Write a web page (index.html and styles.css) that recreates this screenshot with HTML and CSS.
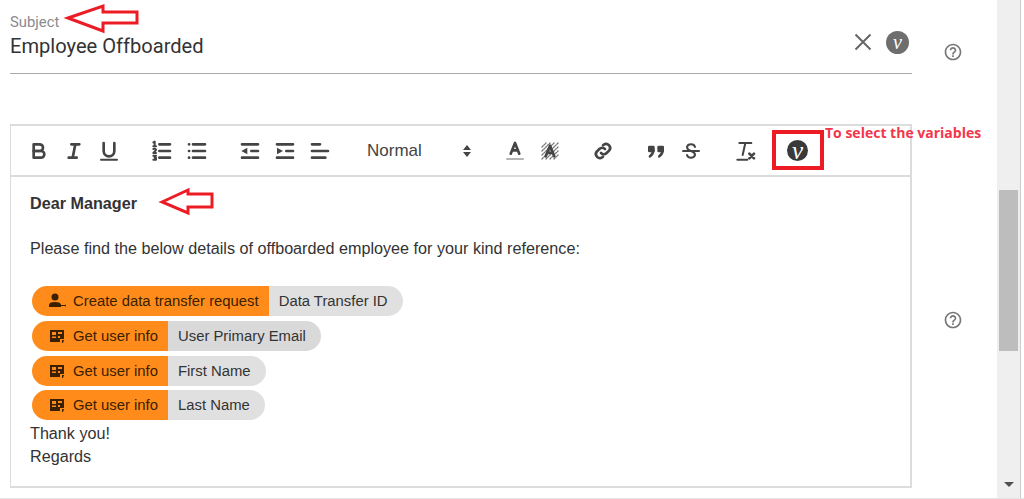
FILE: index.html
```html
<!DOCTYPE html>
<html>
<head>
    <title>Email template</title>
    <link rel="stylesheet" href="styles.css">
</head>
<body>
<div class="page">
    <div class="form">
        <div class="subject">
            <div class="subjectLabel">Subject</div>
            <div class="subjectRow">
                <div class="subjectValue">Employee Offboarded</div>
                <svg class="clearIcon" width="20" height="20" viewBox="0 0 20 20"><path d="M2.500 2.500L17.500 17.500M17.500 2.500L2.500 17.500"/></svg>
                <span class="varIcon varLight">v</span>
            </div>
        </div>

        <div class="editor">
            <div class="toolbar">
                <div class="group">
                    <button class="btn"><svg viewBox="0 0 18 18"><path d="M5,4H9.500A2.500,2.500,0,0,1,12,6.500v0A2.500,2.500,0,0,1,9.500,9H5V4Z"/><path d="M5,9h5.500A2.500,2.500,0,0,1,13,11.500v0A2.500,2.500,0,0,1,10.500,14H5V9Z"/></svg></button>
                    <button class="btn"><svg viewBox="0 0 18 18"><path d="M7 4H13M5 14H11M8 14L10 4"/></svg></button>
                    <button class="btn"><svg viewBox="0 0 18 18"><path d="M5,3V9a4,4,0,0,0,8,0V3"/><path class="thin" d="M3 15.500H15"/></svg></button>
                </div>
                <div class="group">
                    <button class="btn"><svg viewBox="0 0 18 18"><path d="M7 4H15M7 9H15M7 14H15"/><path class="thin" d="M2.500 2.500L3.500 2V5.500M2.500 5.500H4.500M2.500 7.500Q4.500 7 4.500 8.300L2.500 10.500H4.500M2.500 12.500H4.500L3.500 14H4.500V15.500H2.500"/></svg></button>
                    <button class="btn"><svg viewBox="0 0 18 18"><path d="M6 4H15M6 9H15M6 14H15M3 4H3.100M3 9H3.100M3 14H3.100"/></svg></button>
                </div>
                <div class="group">
                    <button class="btn"><svg viewBox="0 0 18 18"><path d="M3 14H15M3 4H15M10 9H15"/><polygon class="solid" points="2.500 9 7 6.500 7 11.500"/></svg></button>
                    <button class="btn"><svg viewBox="0 0 18 18"><path d="M3 14H15M3 4H15M10 9H15"/><polygon class="solid" points="7.500 9 3 6.500 3 11.500"/></svg></button>
                    <button class="btn"><svg viewBox="0 0 18 18"><path d="M3 9H15M3 14H13M3 4H9"/></svg></button>
                </div>
                <div class="picker">
                    <span class="pickerLabel">Normal</span>
                    <svg class="pickerArrows" viewBox="0 0 10 16"><polygon points="5 2 9 7 1 7"/><polygon points="5 14 9 9 1 9"/></svg>
                </div>
                <div class="group">
                    <button class="btn"><svg viewBox="0 0 18 18"><path d="M5.800 11L9 3L12.200 11M6.800 8.500H11.200"/><path class="under" d="M3 15H15"/></svg></button>
                    <button class="btn"><svg viewBox="0 0 18 18"><path class="hatch" d="M3 6L6 3M3 9L9 3M3 12L12 3M3 15L15 3M6 15L15 6M9 15L15 9M12 15L15 12"/><path d="M5.800 13L9 5L12.200 13M6.800 10.500H11.200"/></svg></button>
                </div>
                <div class="group">
                    <button class="btn"><svg viewBox="0 0 18 18"><path d="M7.500 10.500a3 3 0 0 0 4.200 0l2-2a3 3 0 0 0-4.200-4.200l-.5.5"/><path d="M10.500 7.500a3 3 0 0 0-4.200 0l-2 2a3 3 0 0 0 4.200 4.200l.5-.5"/></svg></button>
                </div>
                <div class="group">
                    <button class="btn"><svg viewBox="0 0 18 18"><rect class="solid" x="3" y="5" width="5" height="5" rx="1"/><rect class="solid" x="10" y="5" width="5" height="5" rx="1"/><path d="M7 8Q7 11 4.500 13M14 8Q14 11 11.500 13"/></svg></button>
                    <button class="btn"><svg viewBox="0 0 18 18"><path class="thin" d="M3 9H15"/><path class="thin" d="M12 6Q11.500 4 9 4T6 6Q6 8 9 9T12 12Q11.500 14 9 14T6 12"/></svg></button>
                </div>
                <div class="group groupClean">
                    <button class="btn"><svg viewBox="0 0 18 18"><path class="thin" d="M4 3H13M8.500 3L6.500 12M2.500 15.500H10"/><path d="M11.500 11L15 14.500M15 11L11.500 14.500"/></svg></button>
                </div>
                <span class="varIcon varDark">v</span>
            </div>

            <div class="body">
                <p class="greeting">Dear Manager</p>
                <p class="intro">Please find the below details of offboarded employee for your kind reference:</p>
                <div class="chips">
                    <div class="chip">
                        <span class="chipStep">
                            <svg viewBox="0 0 18 18"><circle cx="7" cy="5" r="3.500"/><path d="M1 15V13Q1 10 7 10T13 13V15Z"/><path d="M13 13H17V12L18 13.500L17 15V14H13Z"/></svg>
                            Create data transfer request
                        </span>
                        <span class="chipField">Data Transfer ID</span>
                    </div>
                    <div class="chip">
                        <span class="chipStep">
                            <svg viewBox="0 0 18 18"><path fill-rule="evenodd" d="M2 3H16V12H12V15H2ZM4 5V8H8V5ZM10 5V7H14V5ZM4 9.500V11H8V9.500ZM10 9V11H12V9Z"/><path d="M14 13H16L15 16H14Z"/></svg>
                            Get user info
                        </span>
                        <span class="chipField chipDim">User Primary Email</span>
                    </div>
                    <div class="chip">
                        <span class="chipStep">
                            <svg viewBox="0 0 18 18"><path fill-rule="evenodd" d="M2 3H16V12H12V15H2ZM4 5V8H8V5ZM10 5V7H14V5ZM4 9.500V11H8V9.500ZM10 9V11H12V9Z"/><path d="M14 13H16L15 16H14Z"/></svg>
                            Get user info
                        </span>
                        <span class="chipField">First Name</span>
                    </div>
                    <div class="chip">
                        <span class="chipStep">
                            <svg viewBox="0 0 18 18"><path fill-rule="evenodd" d="M2 3H16V12H12V15H2ZM4 5V8H8V5ZM10 5V7H14V5ZM4 9.500V11H8V9.500ZM10 9V11H12V9Z"/><path d="M14 13H16L15 16H14Z"/></svg>
                            Get user info
                        </span>
                        <span class="chipField">Last Name</span>
                    </div>
                </div>
                <p class="closing closingFirst">Thank you!</p>
                <p class="closing">Regards</p>
            </div>
        </div>
    </div>

    <div class="side">
        <svg class="help helpTop" viewBox="0 0 24 24"><path d="M11 18h2v-2h-2v2zm1-16C6.480 2 2 6.480 2 12s4.480 10 10 10 10-4.480 10-10S17.520 2 12 2zm0 18c-4.410 0-8-3.590-8-8s3.590-8 8-8 8 3.590 8 8-3.590 8-8 8zm0-14c-2.210 0-4 1.790-4 4h2c0-1.100.9-2 2-2s2 .9 2 2c0 2-3 1.750-3 5h2c0-2.250 3-2.500 3-5 0-2.210-1.790-4-4-4z"/></svg>
        <svg class="help helpBottom" viewBox="0 0 24 24"><path d="M11 18h2v-2h-2v2zm1-16C6.480 2 2 6.480 2 12s4.480 10 10 10 10-4.480 10-10S17.520 2 12 2zm0 18c-4.410 0-8-3.590-8-8s3.590-8 8-8 8 3.590 8 8-3.590 8-8 8zm0-14c-2.210 0-4 1.790-4 4h2c0-1.100.9-2 2-2s2 .9 2 2c0 2-3 1.750-3 5h2c0-2.250 3-2.500 3-5 0-2.210-1.790-4-4-4z"/></svg>
    </div>

    <div class="scrollbar">
        <div class="thumb"></div>
        <div class="scrollDown"></div>
    </div>

    <!-- red markup drawn on top of the screenshot -->
    <svg class="note noteSubject" width="76" height="30" viewBox="66 4 76 30"><polygon points="68,18 103,6 103,12 137,12 137,23 103,23 103,31"/></svg>
    <svg class="note noteGreeting" width="56" height="28" viewBox="160 188 56 28"><polygon points="162,202 188,190 188,194 212,194 212,207 188,207 188,213"/></svg>
    <div class="noteBox"></div>
    <div class="noteText">To select the variables</div>
</div>
</body>
</html>
```

FILE: styles.css
```css
html,
body {
    margin: 0;
    height: 100%;
    overflow: hidden;
    background: #fff;
}

.page {
    position: relative;
    display: flex;
    height: 498px;
    border-bottom: 1px solid #e4e4e4;
    font-family: "Liberation Sans", Arial, sans-serif;
    color: #333;
}

.form {
    width: 902px;
    margin-left: 10px;
    flex: none;
}

.subject {
    height: 73px;
    border-bottom: 1px solid #a8a8a8;
}

.subjectLabel {
    padding-top: 14px;
    font-family: Roboto, sans-serif;
    font-size: 14.800px;
    line-height: 17px;
    color: #8a8a8f;
}

.subjectRow {
    display: flex;
    align-items: center;
    height: 30px;
}

.subjectValue {
    flex: 1;
    font-family: Roboto, sans-serif;
    font-size: 20.100px;
    color: #333;
}

.clearIcon {
    margin-right: 13px;
    margin-top: -8px;
}

.clearIcon path {
    fill: none;
    stroke: #666;
    stroke-width: 2;
}

.varIcon {
    display: flex;
    align-items: center;
    justify-content: center;
    border-radius: 50%;
    font-family: "Liberation Serif", serif;
    font-style: italic;
    color: #fff;
}

.varLight {
    width: 23px;
    height: 23px;
    margin-right: 3px;
    margin-top: -8px;
    background: #6e6e6e;
    font-size: 20px;
}

.varDark {
    width: 21px;
    height: 21px;
    margin-left: 6px;
    background: #3a3a3a;
    font-size: 25px;
    line-height: 21px;
}

.editor {
    margin-top: 50px;
    height: 360px;
    border: 2px solid #dcdcdc;
    border-width: 2px 2px 2px 1px;
}

.toolbar {
    display: flex;
    align-items: center;
    height: 49px;
    padding-left: 10px;
    border-bottom: 2px solid #dcdcdc;
}

.group {
    display: flex;
    margin-right: 18px;
}

.groupClean {
    margin-left: 2px;
}

.btn {
    display: flex;
    align-items: center;
    justify-content: center;
    width: 35px;
    height: 30px;
    padding: 0;
    border: 0;
    background: none;
}

.btn svg {
    width: 24px;
    height: 24px;
    fill: none;
    stroke: #444;
    stroke-width: 2;
    stroke-linecap: round;
    stroke-linejoin: round;
}

.btn .thin {
    stroke-width: 1.500;
}

.btn .solid {
    fill: #444;
    stroke: none;
}

.btn .under {
    stroke: #b5b5b5;
    stroke-width: 1.500;
}

.btn .hatch {
    stroke: #777;
    stroke-width: 1;
    stroke-dasharray: 1 1;
}

.picker {
    display: flex;
    align-items: center;
    width: 130px;
    margin-left: 12px;
    font-size: 17px;
    color: #444;
}

.pickerLabel {
    width: 95px;
}

.pickerArrows {
    width: 10px;
    height: 16px;
    fill: #444;
}

.body {
    padding: 0 19px;
    font-size: 16.180px;
    color: #333;
}

.body p {
    margin: 0;
}

.greeting {
    padding-top: 16px;
    font-weight: bold;
    line-height: 20px;
}

.intro {
    margin-top: 25px !important;
    line-height: 20px;
}

.chips {
    display: flex;
    flex-direction: column;
    gap: 4.800px;
    margin-top: 28px;
    padding-left: 2px;
}

.chip {
    display: flex;
    align-self: flex-start;
    height: 30px;
    line-height: 30px;
    font-size: 14.850px;
    border-radius: 15px;
    overflow: hidden;
}

.chipStep {
    display: flex;
    align-items: center;
    gap: 7px;
    padding: 0 10px 0 16px;
    background: #ff8c1a;
    color: #3a2000;
}

.chipStep svg {
    width: 18px;
    height: 18px;
    fill: #3a2000;
}

.chipField {
    padding: 0 15px 0 10px;
    background: #e0e0e0;
    color: #333;
}

.chipDim {
    background: #d9d9d9;
}

.closing {
    line-height: 23px;
}

.closingFirst {
    padding-top: 2px;
}

.side {
    width: 81px;
    padding-right: 4px;
    flex: none;
    display: flex;
    flex-direction: column;
    align-items: center;
}

.help {
    width: 20px;
    height: 20px;
    fill: #777;
}

.helpTop {
    margin-top: 42px;
}

.helpBottom {
    margin-top: 248px;
}

.scrollbar {
    display: flex;
    flex-direction: column;
    align-items: center;
    width: 23px;
    height: 498px;
    flex: none;
    background: #efefef;
    border-right: 1px solid #ccc;
}

.thumb {
    width: 19px;
    height: 161px;
    margin-top: 190px;
    background: #bdbdbd;
}

.scrollDown {
    margin-top: 131px;
    border-left: 5px solid transparent;
    border-right: 5px solid transparent;
    border-top: 5px solid #505050;
}

.note {
    position: absolute;
    overflow: visible;
}

.note polygon {
    fill: #fff;
    stroke: #ed1c24;
    stroke-width: 3;
}

.noteSubject {
    left: 66px;
    top: 4px;
}

.noteGreeting {
    left: 160px;
    top: 188px;
}

.noteBox {
    position: absolute;
    left: 772px;
    top: 130px;
    width: 44px;
    height: 32px;
    border: 4px solid #ed1c24;
}

.noteText {
    position: absolute;
    left: 825px;
    top: 124px;
    font-family: "Open Sans", sans-serif;
    font-size: 14px;
    font-weight: bold;
    line-height: 18px;
    color: #f4364c;
    white-space: nowrap;
}
```
